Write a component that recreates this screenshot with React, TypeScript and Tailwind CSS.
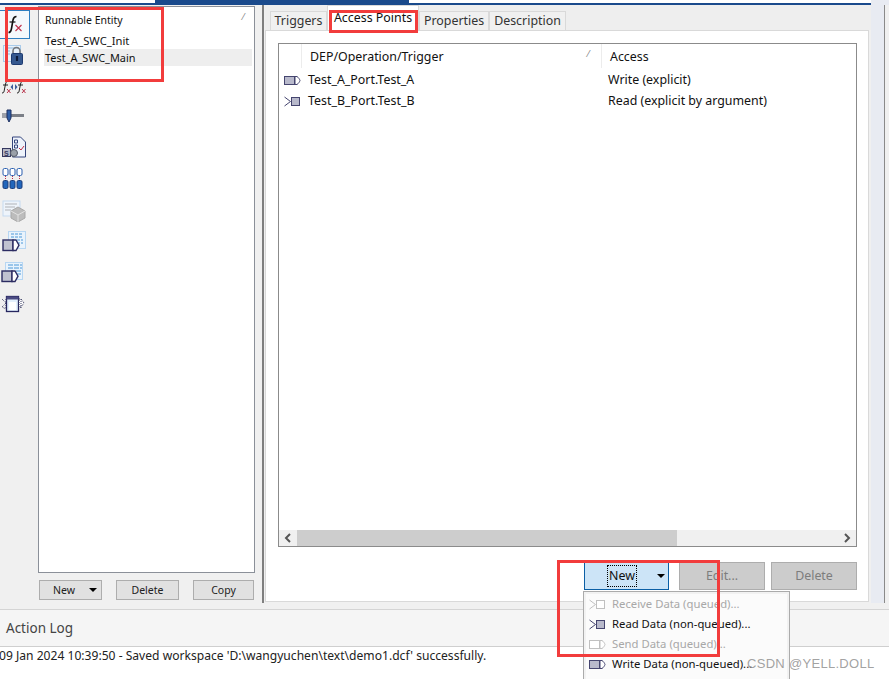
const font = '[font-family:"Noto_Sans",sans-serif]';

const Fx = () => (
  <svg viewBox="0 0 20 20" className="h-[20px] w-[20px]">
    <path d="M3.500 17.500c2 0 2.500-1 3-4l1.500-8.500c.5-2.500 1.500-3.500 3.500-3.500" fill="none" stroke="#111" strokeWidth="1.600" />
    <path d="M4.500 7h6" stroke="#111" strokeWidth="1.200" />
    <path d="M10.500 10l6 6M16.500 10l-6 6" stroke="#c0304a" strokeWidth="1.100" />
  </svg>
);

const LockIcon = () => (
  <svg viewBox="0 0 22 22" className="h-[22px] w-[22px]">
    <rect x="1.500" y="1.500" width="17" height="16" fill="#e8f2fb" stroke="#a9cbea" />
    <path d="M3 4h14M3 7h5M3 10h5" stroke="#8db7dd" />
    <path d="M11 9V7a3.500 3.500 0 0 1 7 0v2" fill="none" stroke="#77787c" strokeWidth="1.600" />
    <rect x="9.500" y="9.500" width="11" height="11" rx="1" fill="#35588f" stroke="#1e3a70" />
    <path d="M15 12v5" stroke="#0c1a3a" strokeWidth="2.200" />
  </svg>
);

const SwapIcon = () => (
  <svg viewBox="0 0 26 14" className="h-[14px] w-[26px]">
    <path d="M1 13c2 0 2-1 2.500-4l1-5C5 2 6 1 8 1M2 5h5" fill="none" stroke="#222" />
    <path d="M6 9l3.500 4M9.500 9L6 13" stroke="#b8324a" />
    <path d="M12 4L9.500 7 12 10zM14 4l2.500 3L14 10z" fill="#3d5f9c" />
    <path d="M16 13c2 0 2-1 2.500-4l1-5c.5-2 1.500-3 3.500-3M17 5h5" fill="none" stroke="#222" />
    <path d="M21 9l3.500 4M24.500 9L21 13" stroke="#b8324a" />
  </svg>
);

const SliderIcon = () => (
  <svg viewBox="0 0 24 14" className="h-[14px] w-[24px]">
    <rect x="1" y="5" width="22" height="3" fill="#7b7f87" />
    <rect x="1" y="4" width="5" height="5" fill="#9ea2aa" />
    <path d="M6 1h4v8l-2 4-2-4z" fill="#2f5fa8" stroke="#1d2f5f" />
  </svg>
);

const SDocIcon = () => (
  <svg viewBox="0 0 24 22" className="h-[22px] w-[24px]">
    <path d="M10.500 1h8l5 5v15h-13z" fill="#eef3fb" stroke="#35457c" />
    <path d="M12.500 4h3v3h-3zM12.500 9h3v3h-3z" fill="none" stroke="#35457c" />
    <path d="M17 12l2 2 3-4" fill="none" stroke="#c0304a" />
    <rect x="0.500" y="12.500" width="8" height="8" fill="#b5b8c7" stroke="#35385f" />
    <text x="2" y="19.500" fontSize="7" fontWeight="700" fill="#35385f" fontFamily="Liberation Sans">S</text>
    <circle cx="12" cy="17" r="3.500" fill="#9aa0a8" stroke="#555b66" />
  </svg>
);

const ChainIcon = () => (
  <svg viewBox="0 0 22 22" className="h-[22px] w-[22px]">
    {[3, 10, 17].map((x) => (
      <g key={x}>
        <rect x={x - 2} y="1.500" width="5" height="7" rx="1.500" fill="#fff" stroke="#2a5fb0" />
        <path d={`M${x + 0.5} 9v4`} stroke="#c0304a" strokeDasharray="1 1" />
        <rect x={x - 2} y="13.500" width="5" height="8" rx="1.500" fill="#2266bb" stroke="#1b3b78" />
      </g>
    ))}
  </svg>
);

const CubeIcon = () => (
  <svg viewBox="0 0 24 22" className="h-[22px] w-[24px]">
    <rect x="1" y="1" width="17" height="15" fill="#eef4fb" stroke="#c5daf0" />
    <path d="M3 4h12M3 7h10M3 10h6" stroke="#b0b3b8" />
    <path d="M9 11l7-4 7 4v7l-7 4-7-4z" fill="#bcbcbc" stroke="#a8a8a8" />
    <path d="M9 11l7 4 7-4M16 15v7" stroke="#e2e2e2" fill="none" />
  </svg>
);

const PortDocIcon = ({ wide = false }: { wide?: boolean }) => (
  <svg viewBox="0 0 24 22" className="h-[22px] w-[24px]">
    <rect x={wide ? 6.5 : 4.500} y="1.500" width="17" height="17" fill="#e9f3fc" stroke="#b7d6f2" />
    <path d={wide ? 'M9 4h12M9 7h12M15 10h6M15 13h6' : 'M7 4h14M7 7h14M15 10h6M15 13h6'} stroke="#4d98d8" strokeDasharray={wide ? '3 1' : '5 1'} />
    <rect x="1" y="10" width="10" height="10.500" fill="#c0c2d0" stroke="#2c2c62" strokeWidth="1.400" />
    <path d="M11 10h3l3 5.200-3 5.300h-3z" fill="#fff" stroke="#2c2c62" strokeWidth="1.400" />
  </svg>
);

const BlockIcon = () => (
  <svg viewBox="0 0 24 20" className="h-[20px] w-[24px]">
    <path d="M1 5l4 4-4 4 4 2M5 5v10" fill="none" stroke="#35385f" strokeDasharray="1 1" />
    <rect x="5.500" y="2.500" width="12" height="15" fill="#e3f0fc" stroke="#26265f" strokeWidth="1.300" />
    <rect x="5.500" y="2.500" width="12" height="3" fill="#4a4a82" />
    <rect x="8" y="8" width="7" height="8" fill="#fff" />
    <path d="M18 5h2l3 4-3 4h-2z" fill="#fff" stroke="#35385f" strokeDasharray="1 1" />
    <path d="M20 5v10" stroke="#35385f" strokeDasharray="1 1" />
  </svg>
);

// port glyphs used by the table rows and by the menu
const WritePort = ({ off = false }: { off?: boolean }) => (
  <svg viewBox="0 0 17 11" className="h-[11px] w-[17px]">
    <rect x="0.500" y="1.500" width="10" height="8" fill={off ? '#fff' : '#b8b9cb'} stroke={off ? '#c0c0c0' : '#45456f'} />
    <path d="M11 1.500h2c1.500 1 2.500 2.500 3 4-.5 1.500-1.500 3-3 4h-2z" fill="#fff" stroke={off ? '#c0c0c0' : '#45456f'} />
  </svg>
);

const ReadPort = ({ off = false }: { off?: boolean }) => (
  <svg viewBox="0 0 17 11" className="h-[11px] w-[17px]">
    <path d="M0.500 1l6 4.500-6 4.500" fill="none" stroke={off ? '#c0c0c0' : '#45456f'} />
    <rect x="7.500" y="1.500" width="8" height="8" fill={off ? '#fff' : '#b8b9cb'} stroke={off ? '#c0c0c0' : '#45456f'} />
  </svg>
);

const Caret = () => <span className="block h-0 w-0 border-x-[4px] border-t-[4px] border-x-transparent border-t-black" />;

const menu = [
  { icon: <ReadPort off />, label: 'Receive Data (queued)...', off: true },
  { icon: <ReadPort />, label: 'Read Data (non-queued)...', off: false },
  { icon: <WritePort off />, label: 'Send Data (queued)...', off: true },
  { icon: <WritePort />, label: 'Write Data (non-queued)...', off: false },
];

export default function App() {
  return (
    <div className={`relative flex h-[679px] w-[889px] flex-col overflow-hidden bg-[#f0f0f0] text-[12.400px] leading-none text-[#111] ${font}`}>
      <div className="flex h-[5px] shrink-0">
        <div className="flex flex-1 flex-col">
          <div className="flex h-[3px]">
            <div className="w-[155px] bg-white" />
            <div className="w-[254px] bg-[#1a4a8c]" />
            <div className="flex-1 bg-white" />
          </div>
          <div className="h-[2px] bg-[#1a4a8c]" />
        </div>
        <div className="w-[18px] bg-[#e8ebf2]" />
      </div>

      <div className="flex h-[598px] shrink-0">
        {/* icon rail */}
        <div className="flex w-[38px] shrink-0 flex-col items-start pt-[5px]">
          <div className="flex h-[29px] w-[30px] items-center justify-center border-y border-r border-[#2f7fc1] bg-[#f4f8fc]"><Fx /></div>
          <div className="ml-[2px] mt-[5px] h-[22px]"><LockIcon /></div>
          <div className="ml-[1px] mt-[14px] h-[14px]"><SwapIcon /></div>
          <div className="ml-[1px] mt-[15px] h-[14px]"><SliderIcon /></div>
          <div className="ml-[2px] mt-[13px] h-[22px]"><SDocIcon /></div>
          <div className="ml-[2px] mt-[9px] h-[22px]"><ChainIcon /></div>
          <div className="ml-[2px] mt-[11px] h-[22px]"><CubeIcon /></div>
          <div className="ml-[2px] mt-[8px] h-[22px]"><PortDocIcon wide /></div>
          <div className="ml-[1px] mt-[9px] h-[22px]"><PortDocIcon /></div>
          <div className="ml-[1px] mt-[11px] h-[20px]"><BlockIcon /></div>
        </div>

        {/* runnable list */}
        <div className="flex w-[217px] shrink-0 flex-col pt-[1px] text-[11.200px]">
          <div className="h-[567px] border border-[#8b9099] bg-white">
            <div className="flex h-[24px] items-center justify-between pl-[6px] pr-[10px] pt-[3px]">
              <span className="text-[10.500px]">Runnable Entity</span>
              <span className="pb-[9px] text-[9px] text-[#777]">⁄</span>
            </div>
            <div className="ml-[5px] mr-[2px] mt-[1px]">
              <div className="flex h-[17px] items-center pl-[1px]">Test_A_SWC_Init</div>
              <div className="flex h-[17px] items-center bg-[#eeeeee] pl-[1px] pt-[1px] text-[10.900px]">Test_A_SWC_Main</div>
            </div>
          </div>
          <div className="mt-[7px] flex gap-[14px] pl-[1px] text-[10.500px] text-[#222]">
            <button className="flex h-[20px] w-[63px] items-center justify-between border border-[#adadad] bg-[#e1e1e1] pl-[13px] pr-[4px]">New <Caret /></button>
            <button className="h-[20px] w-[63px] border border-[#adadad] bg-[#e1e1e1]">Delete</button>
            <button className="h-[20px] w-[61px] border border-[#adadad] bg-[#e1e1e1]">Copy</button>
          </div>
        </div>

        <div className="ml-[7px] w-[2px] shrink-0 bg-[#7f7f7f]" />

        {/* details pane */}
        <div className="flex w-[607px] shrink-0 flex-col pl-[1px]">
          <div className="flex h-[25px] shrink-0 items-end bg-[#eeeeee] pl-[5px] text-[#333]">
            <div className="flex h-[19px] w-[57px] items-center justify-center border-x border-t border-[#d9d9d9] bg-[#f0f0f0]">Triggers</div>
            <div className="flex h-[25px] w-[92px] items-start justify-center border-x border-t border-[#d9d9d9] bg-white pt-[6px] text-[#111]">Access Points</div>
            <div className="flex h-[19px] w-[70px] items-center justify-center border-x border-t border-[#d9d9d9] bg-[#f0f0f0]">Properties</div>
            <div className="flex h-[19px] w-[77px] items-center justify-center border-x border-t border-[#d9d9d9] bg-[#f0f0f0]">Description</div>
          </div>
          <div className="flex h-[572px] w-[604px] flex-col border border-[#d9d9d9] bg-white pl-[12px] pt-[12px]">
            <div className="flex h-[504px] w-[579px] flex-col border border-[#8b8b8b]">
              <div className="flex h-[24px] shrink-0">
                <div className="h-full w-[23px] border-r border-[#ececec]" />
                <div className="flex w-[300px] items-center justify-between border-r border-[#ececec] pl-[8px] pr-[12px] pt-[3px]">
                  <span>DEP/Operation/Trigger</span>
                  <span className="pb-[9px] text-[9px] text-[#777]">⁄</span>
                </div>
                <div className="flex items-center pl-[8px] pt-[3px]">Access</div>
              </div>
              <div className="mt-[2px] flex h-[21px] items-center pl-[5px]">
                <WritePort />
                <span className="ml-[7px] w-[300px]">Test_A_Port.Test_A</span>
                <span>Write (explicit)</span>
              </div>
              <div className="flex h-[21px] items-center pl-[5px]">
                <ReadPort />
                <span className="ml-[7px] w-[300px]">Test_B_Port.Test_B</span>
                <span>Read (explicit by argument)</span>
              </div>
              <div className="flex-1" />
              <div className="flex h-[16px] shrink-0 items-center bg-[#f0f0f0]">
                <div className="flex w-[18px] justify-center">
                  <svg viewBox="0 0 8 10" className="h-[10px] w-[8px]"><path d="M6 1L2 5l4 4" fill="none" stroke="#555" strokeWidth="2" /></svg>
                </div>
                <div className="h-full w-[380px] bg-[#cdcdcd]" />
                <div className="flex-1" />
                <div className="flex w-[18px] justify-center">
                  <svg viewBox="0 0 8 10" className="h-[10px] w-[8px]"><path d="M2 1l4 4-4 4" fill="none" stroke="#555" strokeWidth="2" /></svg>
                </div>
              </div>
            </div>
            <div className="mt-[15px] flex pl-[306px]">
              <button className="flex h-[28px] w-[85px] items-center justify-between border border-[#0b5fa5] bg-[#cce4f7] pl-[22px] pr-[3px]">
                <span className="flex h-[22px] w-[30px] items-center justify-center border border-dotted border-black">New</span>
                <Caret />
              </button>
              <button className="ml-[10px] h-[28px] w-[86px] border border-[#adadad] bg-[#cccccc] text-[#7d7d7d]">Edit...</button>
              <button className="ml-[6px] h-[28px] w-[86px] border border-[#adadad] bg-[#cccccc] text-[#7d7d7d]">Delete</button>
            </div>
          </div>
        </div>
        <div className="w-[13px] bg-[#e8ebf2]" />
        <div className="w-[1px] bg-[#8a8a8a]" />
      </div>

      {/* action log */}
      <div className="mt-[6px] flex h-[38px] shrink-0 items-center border-y border-t-[#d4d4d4] border-b-[#cfcfcf] bg-[#f5f5f5] pl-[6px] pt-[1px] text-[13.500px] text-[#444]">Action Log</div>
      <div className="flex-1 bg-white pt-[3px] text-[12.100px] text-[#222]">
        <div className="-ml-[1px] whitespace-nowrap">09 Jan 2024 10:39:50 - Saved workspace 'D:\wangyuchen\text\demo1.dcf' successfully.</div>
      </div>

      {/* dropdown menu */}
      <div className="absolute left-[583px] top-[591px] w-[207px] border border-[#ababab] bg-[#f2f2f2] p-[2px] text-[11.300px]">
        <div className="h-[88px] bg-[#fbfbfb] pl-[3px]">
          {menu.map((m) => (
            <div key={m.label} className={`flex h-[20px] items-center ${m.off ? 'text-[#a8a8a8]' : 'text-[#111]'}`}>
              {m.icon}
              <span className="ml-[6px] whitespace-nowrap">{m.label}</span>
            </div>
          ))}
        </div>
      </div>

      {/* annotations */}
      <div className="absolute left-[5px] top-[7px] h-[75px] w-[159px] border-[3px] border-[#f23c3c]" />
      <div className="absolute left-[329px] top-[10px] h-[23px] w-[89px] border-[3px] border-[#f23c3c]" />
      <div className="absolute left-[557px] top-[560px] h-[97px] w-[163px] border-[3px] border-[#f23c3c]" />
      <div className="absolute left-[747px] top-[657px] [font-family:'Liberation_Sans',sans-serif] text-[13px] tracking-[0.300px] text-[#8a8a8a]/80">CSDN @YELL.DOLL</div>
    </div>
  );
}
